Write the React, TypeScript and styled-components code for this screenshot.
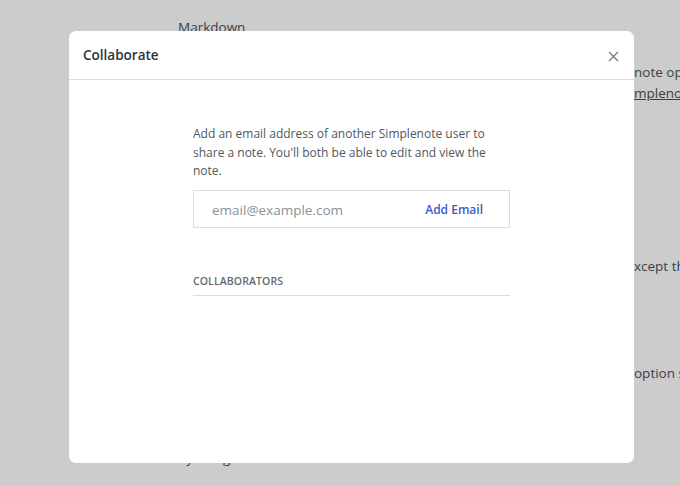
import * as React from 'react';
import styled, { createGlobalStyle } from 'styled-components';

const GlobalStyle = createGlobalStyle`
  html, body {
    margin: 0;
    padding: 0;
    width: 680px;
    height: 486px;
    overflow: hidden;
    background: #cccccc;
  }
  * { box-sizing: border-box; }
`;

const SettingsPage = styled.div`
  width: 680px;
  height: 486px;
  overflow: hidden;
  background: #cccccc;
  font-family: "Open Sans", "Noto Sans", sans-serif;
  font-size: 13.5px;
  color: #3d3f42;
  padding: 17px 0 0 178px;
  display: flex;
  flex-direction: column;
`;

const SettingRow = styled.div<{ $gap: number }>`
  display: grid;
  grid-template-columns: 456px 300px;
  margin-top: ${(p) => p.$gap}px;
  line-height: 20px;
  white-space: nowrap;
`;

const BgLink = styled.span`
  text-decoration: underline;
`;

const Overlay = styled.div`
  position: fixed;
  inset: 0;
  display: flex;
  align-items: flex-start;
  padding: 31px 0 0 69px;
`;

const Modal = styled.div`
  width: 565px;
  height: 432px;
  background: #ffffff;
  border-radius: 7px;
  display: flex;
  flex-direction: column;
  font-family: "Open Sans", "Noto Sans", sans-serif;
`;

const ModalHeader = styled.div`
  height: 49px;
  flex-shrink: 0;
  border-bottom: 1px solid #dcdcde;
  display: flex;
  align-items: center;
  justify-content: space-between;
  padding: 0 14px;
`;

const Title = styled.h2`
  margin: 0;
  font-size: 13.5px;
  font-weight: 600;
  color: #2c3338;
`;

const CloseButton = styled.button`
  border: 0;
  background: none;
  padding: 0;
  width: 14px;
  height: 14px;
  display: flex;
  align-items: center;
  justify-content: center;
  color: #787c82;
  cursor: pointer;
  margin-top: 3px;
`;

const ModalBody = styled.div`
  width: 317px;
  margin: 0 auto;
  padding-top: 45px;
`;

const Description = styled.p`
  margin: 0 0 9px;
  font-size: 12px;
  line-height: 18.5px;
  color: #50575e;
`;

const EmailField = styled.div`
  height: 38px;
  border: 1px solid #dcdcde;
  display: flex;
  align-items: center;
  padding: 2px 26px 0 18px;
`;

const EmailInput = styled.input`
  flex: 1;
  border: 0;
  outline: none;
  font-family: inherit;
  font-size: 13.5px;
  color: #2c3338;
  padding: 0;
  &::placeholder {
    color: #8c8f94;
  }
`;

const AddButton = styled.button`
  border: 0;
  background: none;
  padding: 0;
  font-family: inherit;
  font-size: 12px;
  font-weight: 600;
  color: #3a5bc4;
  cursor: pointer;
`;

const SectionHeading = styled.h3`
  margin: 46px 0 0;
  padding-bottom: 7px;
  border-bottom: 1px solid #dcdcde;
  font-size: 10.5px;
  font-weight: 600;
  letter-spacing: 0.1px;
  text-transform: uppercase;
  color: #646970;
`;

const XIcon = () => (
  <svg width="11" height="11" viewBox="0 0 11 11" fill="none" stroke="currentColor" strokeWidth="1.4">
    <path d="M1 1 L10 10 M10 1 L1 10" />
  </svg>
);

export default function App() {
  return (
    <>
      <GlobalStyle />
      <SettingsPage>
        <SettingRow $gap={0}>
          <span>Markdown</span>
        </SettingRow>
        <SettingRow $gap={25}>
          <span />
          <span>note opens in the editor</span>
        </SettingRow>
        <SettingRow $gap={1}>
          <span />
          <BgLink>mplenote.com</BgLink>
        </SettingRow>
        <SettingRow $gap={153}>
          <span />
          <span>xcept the note list</span>
        </SettingRow>
        <SettingRow $gap={87}>
          <span />
          <span>option settings</span>
        </SettingRow>
        <SettingRow $gap={65}>
          <span>by using</span>
        </SettingRow>
      </SettingsPage>
      <Overlay>
        <Modal role="dialog" aria-label="Collaborate">
          <ModalHeader>
            <Title>Collaborate</Title>
            <CloseButton aria-label="Close">
              <XIcon />
            </CloseButton>
          </ModalHeader>
          <ModalBody>
            <Description>
              Add an email address of another Simplenote user to share a note. You'll both be able to edit and view the note.
            </Description>
            <EmailField>
              <EmailInput placeholder="email@example.com" />
              <AddButton>Add Email</AddButton>
            </EmailField>
            <SectionHeading>Collaborators</SectionHeading>
          </ModalBody>
        </Modal>
      </Overlay>
    </>
  );
}
